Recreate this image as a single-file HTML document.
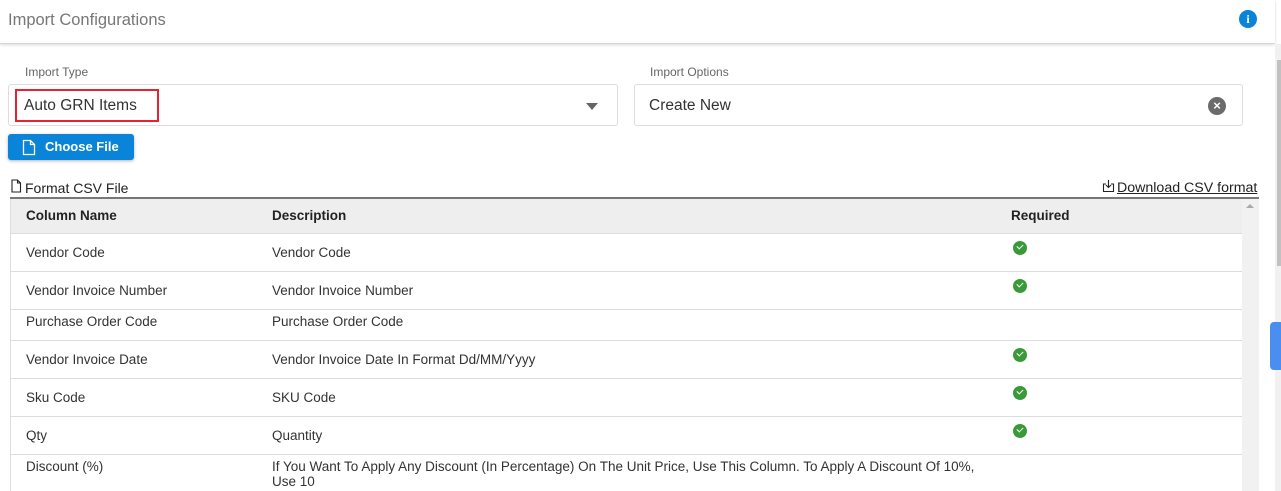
<!DOCTYPE html>
<html><head><style>
*{margin:0;padding:0;box-sizing:border-box}
body{width:1281px;height:491px;overflow:hidden;background:#fff;font-family:"Liberation Sans",sans-serif;color:#333;position:relative}
.a{position:absolute;white-space:nowrap}
.hdr{position:absolute;left:0;top:0;width:1275px;height:44px;background:#fff;border-bottom:1px solid #d6d6d6;box-shadow:0 1px 3px rgba(0,0,0,.15)}
.lbl{font-size:12px;color:#666}
.box{position:absolute;border:1px solid #ddd;border-radius:3px;height:42px;top:84px;background:#fff}
.t{font-size:13.5px;color:#333}
.th{font-size:13.5px;font-weight:bold;color:#222}
.row{position:absolute;left:10px;width:1232px;border-bottom:1px solid #ddd}
.ok{position:absolute;left:1013px;width:14px;height:14px;border-radius:50%;background:#3a9a3a}
.ok:after{content:"";position:absolute;left:4px;top:3px;width:5px;height:3px;border-left:1.5px solid #fff;border-bottom:1.5px solid #fff;transform:rotate(-45deg)}
</style></head><body>
<div class="hdr"></div>
<div class="a" style="left:8px;top:11px;font-size:16.5px;color:#777">Import Configurations</div>
<div class="a" style="left:1239px;top:10px;width:18px;height:18px;border-radius:50%;background:#0a84d8;color:#fff;font-size:12px;font-weight:bold;text-align:center;line-height:18px;font-family:'Liberation Serif',serif">i</div>
<div class="a" style="left:1275px;top:44px;width:6px;height:447px;background:#f1f1f1"></div>
<div class="a" style="left:1277px;top:60px;width:4px;height:206px;background:#c1c1c1"></div>
<div class="a" style="left:1270px;top:322px;width:11px;height:48px;background:#4a8ef0;border-radius:4px 0 0 4px"></div>

<div class="a lbl" style="left:25px;top:65px">Import Type</div>
<div class="a lbl" style="left:650px;top:65px">Import Options</div>
<div class="box" style="left:8px;width:610px"></div>
<div class="a" style="left:15px;top:89px;width:144px;height:33px;border:2px solid #e8232f"></div>
<div class="a" style="left:24px;top:97px;font-size:15.5px;color:#333">Auto GRN Items</div>
<div class="a" style="left:586px;top:103px;width:0;height:0;border-left:6px solid transparent;border-right:6px solid transparent;border-top:7px solid #666"></div>
<div class="box" style="left:634px;width:609px"></div>
<div class="a" style="left:649px;top:97px;font-size:15.5px;color:#333">Create New</div>
<div class="a" style="left:1208px;top:97px;width:18px;height:18px;border-radius:50%;background:#6b6b6b;color:#fff;font-size:13px;font-weight:bold;text-align:center;line-height:18px">×</div>

<div class="a" style="left:8px;top:134px;width:126px;height:26px;background:#0a84d8;border-radius:3px;box-shadow:0 1px 3px rgba(0,0,0,.3)"></div>
<svg class="a" style="left:22px;top:139px" width="14" height="17" viewBox="0 0 14 17"><path d="M1.5 1.5h7l4 4v10h-11z M8.5 1.5v4h4" fill="none" stroke="#fff" stroke-width="1.3"/></svg>
<div class="a" style="left:45px;top:139px;font-size:13px;font-weight:bold;color:#fff">Choose File</div>

<svg class="a" style="left:11px;top:179px" width="12" height="14" viewBox="0 0 12 14"><path d="M1 1h5.5l3 3v9H1z M6.5 1v3h3" fill="none" stroke="#222" stroke-width="1.1"/></svg>
<div class="a" style="left:25px;top:180px;color:#222;font-size:14px">Format CSV File</div>
<svg class="a" style="left:1102px;top:179px" width="13" height="14" viewBox="0 0 13 14"><path d="M4 5H1.5v7.5h10V5H9 M6.5 1v7 M4 6l2.5 2.5L9 6" fill="none" stroke="#222" stroke-width="1.1"/></svg>
<div class="a" style="left:1117px;top:180px;color:#222;font-size:14.2px;text-decoration:underline">Download CSV format</div>

<div class="a" style="left:10px;top:197px;width:1249px;height:2px;background:#777"></div>
<div class="a" style="left:10px;top:199px;width:1232px;height:35px;background:#eee;border-bottom:1px solid #ddd"></div>
<div class="a" style="left:1242px;top:199px;width:17px;height:292px;background:#f1f1f1"></div>
<div class="a" style="left:1246px;top:204px;width:0;height:0;border-left:4px solid transparent;border-right:4px solid transparent;border-bottom:4px solid #aaa"></div>
<div class="a" style="left:10px;top:199px;width:1px;height:292px;background:#ddd"></div>
<div class="a th" style="left:26px;top:208px">Column Name</div>
<div class="a th" style="left:272px;top:208px">Description</div>
<div class="a th" style="left:1011px;top:208px">Required</div>

<div class="row" style="top:234px;height:38px"></div>
<div class="a t" style="left:26px;top:245px">Vendor Code</div><div class="a t" style="left:272px;top:245px">Vendor Code</div><div class="ok" style="top:241px"></div>
<div class="row" style="top:272px;height:38px"></div>
<div class="a t" style="left:26px;top:283px">Vendor Invoice Number</div><div class="a t" style="left:272px;top:283px">Vendor Invoice Number</div><div class="ok" style="top:279px"></div>
<div class="row" style="top:310px;height:31px"></div>
<div class="a t" style="left:26px;top:314px">Purchase Order Code</div><div class="a t" style="left:272px;top:314px">Purchase Order Code</div>
<div class="row" style="top:341px;height:38px"></div>
<div class="a t" style="left:26px;top:352px">Vendor Invoice Date</div><div class="a t" style="left:272px;top:352px">Vendor Invoice Date In Format Dd/MM/Yyyy</div><div class="ok" style="top:348px"></div>
<div class="row" style="top:379px;height:38px"></div>
<div class="a t" style="left:26px;top:390px">Sku Code</div><div class="a t" style="left:272px;top:390px">SKU Code</div><div class="ok" style="top:386px"></div>
<div class="row" style="top:417px;height:38px"></div>
<div class="a t" style="left:26px;top:428px">Qty</div><div class="a t" style="left:272px;top:428px">Quantity</div><div class="ok" style="top:424px"></div>
<div class="a t" style="left:26px;top:459px">Discount (%)</div>
<div class="a t" style="left:272px;top:459px;line-height:15px">If You Want To Apply Any Discount (In Percentage) On The Unit Price, Use This Column. To Apply A Discount Of 10%,<br>Use 10</div>
</body></html>
